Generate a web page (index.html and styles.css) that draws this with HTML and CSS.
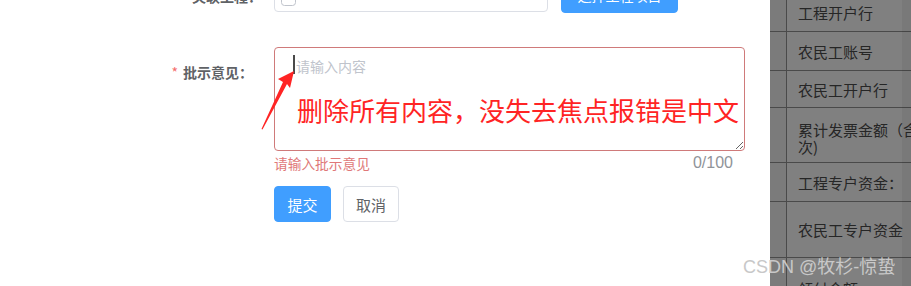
FILE: index.html
```html
<!DOCTYPE html>
<html lang="zh-CN">
<head>
<meta charset="utf-8">
<title>批示意见</title>
<link rel="stylesheet" href="styles.css">
</head>
<body>
<div class="page">
  <main class="form">
    <div class="row row-top">
      <label class="label label-top">关联工程：</label>
      <div class="input">
        <svg class="input-icon" viewBox="0 0 17 16" aria-hidden="true">
          <path d="M1.5 0 V11.5 a3 3 0 0 0 3 3 H12.5 a3 3 0 0 0 3 -3 V0" fill="none" stroke="#c0c4cc" stroke-width="1"/>
        </svg>
      </div>
      <button class="btn btn-primary btn-top">选择工程项目</button>
    </div>

    <div class="row row-opinion">
      <label class="label label-opinion"><span class="star">*</span>批示意见：</label>
      <div class="field">
        <textarea class="textarea" placeholder="请输入内容" readonly></textarea>
        <span class="caret"></span>
        <span class="annotation">删除所有内容，没失去焦点报错是中文</span>
        <svg class="arrow" viewBox="0 0 40 65" aria-hidden="true">
          <polygon points="36,4 20,12 25,15 3.5,62 4.5,62.5 29,17 32,21" fill="#ff2424"/>
        </svg>
      </div>
    </div>

    <div class="row row-meta">
      <div class="meta">
        <span class="error">请输入批示意见</span>
        <span class="counter">0/100</span>
      </div>
    </div>

    <div class="row row-actions">
      <button class="btn btn-primary btn-submit">提交</button>
      <button class="btn btn-default">取消</button>
    </div>
  </main>

  <aside class="panel">
    <div class="prow prow-a"><div class="pcol"></div><div class="pcell">工程开户行</div></div>
    <div class="prow prow-b"><div class="pcol"></div><div class="pcell">农民工账号</div></div>
    <div class="prow prow-c"><div class="pcol"></div><div class="pcell">农民工开户行</div></div>
    <div class="prow prow-d"><div class="pcol"></div><div class="pcell pcell-multi">累计发票金额（含本<br>次)</div></div>
    <div class="prow prow-e"><div class="pcol"></div><div class="pcell">工程专户资金：</div></div>
    <div class="prow prow-f"><div class="pcol"></div><div class="pcell">农民工专户资金</div></div>
    <div class="prow prow-g"><div class="pcol"></div><div class="pcell pcell-top">领付金额</div></div>
    <div class="panel-edge"></div>
  </aside>

  <div class="watermark">CSDN @牧杉-惊蛰</div>
</div>
</body>
</html>
```

FILE: styles.css
```css
* { box-sizing: border-box; }

html, body {
  margin: 0;
  padding: 0;
  background: #fff;
}

body {
  font-family: "Noto Sans CJK SC", "Noto Sans", sans-serif;
}

.page {
  position: relative;
  display: flex;
  width: 911px;
  height: 286px;
  overflow: hidden;
}

.form {
  width: 770px;
  flex: none;
}

.row { display: flex; }

.label {
  width: 274px;
  flex: none;
  text-align: right;
  font-size: 14px;
  font-weight: 700;
  color: #606266;
}

/* top (cut-off) row */
.row-top {
  margin-top: -24px;
  height: 36px;
}

.label-top {
  line-height: 36px;
  padding-right: 12px;
  padding-top: 2px;
}

.input {
  width: 274px;
  height: 36px;
  border: 1px solid #dcdfe6;
  border-radius: 4px;
  padding-left: 5px;
  display: flex;
  align-items: flex-start;
}

.input-icon {
  margin-top: 14px;
  width: 17px;
  height: 16px;
}

.btn {
  font-family: "Noto Sans CJK SC", sans-serif;
  border-radius: 4px;
  border: 1px solid transparent;
  padding: 0;
  font-size: 15px;
  line-height: 1;
}

.btn-primary {
  background: #409eff;
  border-color: #409eff;
  color: #fff;
}

.btn-top {
  width: 117px;
  height: 36px;
  margin-left: 13px;
  margin-top: 1px;
  font-size: 14px;
}

/* opinion row */
.row-opinion { margin-top: 35px; }

.label-opinion {
  height: 40px;
  line-height: 40px;
  margin-top: 5px;
  padding-right: 21px;
}

.star {
  color: #f56c6c;
  font-weight: 400;
  margin-right: 5px;
}

.field {
  position: relative;
  width: 471px;
  height: 104px;
}

.textarea {
  display: block;
  width: 471px;
  height: 104px;
  margin: 0;
  border: 1px solid #cf7a7a;
  border-radius: 4px;
  padding: 8px 21px;
  font: 14px/21px "Noto Sans CJK SC", sans-serif;
  color: #606266;
  background: #fff;
  outline: none;
  resize: vertical;
}

.textarea::placeholder { color: #c0c4cc; }

.caret {
  position: absolute;
  left: 19px;
  top: 8px;
  width: 2px;
  height: 19px;
  background: #4a4a4a;
}

.annotation {
  position: absolute;
  left: 23px;
  top: 48px;
  font-size: 26px;
  line-height: 30px;
  color: #ff2424;
  white-space: nowrap;
}

.arrow {
  position: absolute;
  left: -16px;
  top: 20px;
  width: 40px;
  height: 65px;
  overflow: visible;
}

/* meta row */
.row-meta {
  padding-left: 274px;
  margin-top: 2px;
}

.meta {
  width: 471px;
  height: 20px;
  display: flex;
  justify-content: space-between;
  align-items: center;
  padding-right: 12px;
}

.error {
  font-size: 13.7px;
  line-height: 20px;
  color: #e07878;
}

.counter {
  font-family: "Liberation Sans", sans-serif;
  font-size: 16px;
  color: #909399;
}

/* actions */
.row-actions {
  padding-left: 274px;
  margin-top: 13px;
}

.btn-submit {
  width: 57px;
  height: 36px;
}

.btn-default {
  width: 56px;
  height: 36px;
  margin-left: 12px;
  background: #fff;
  border-color: #dcdfe6;
  color: #606266;
}

/* dimmed table on the right */
.panel {
  position: relative;
  width: 141px;
  flex: none;
  background: #808080;
  overflow: hidden;
}

.prow {
  display: flex;
  border-bottom: 1px solid #4a4a4a;
}

.pcol {
  width: 17px;
  flex: none;
  background: #7b7b7b;
  border-right: 1px solid #4a4a4a;
}

.pcell {
  flex: 1;
  min-width: 0;
  display: flex;
  align-items: center;
  padding-left: 11px;
  font-size: 15px;
  line-height: 17px;
  color: #262626;
  white-space: nowrap;
  overflow: hidden;
}

.pcell-multi { padding-top: 5px; }

.pcell-top {
  align-items: flex-start;
  padding-top: 22px;
}

.prow-a { height: 39px; margin-top: -7px; }
.prow-b { height: 39px; }
.prow-c { height: 37px; }
.prow-d { height: 55px; }
.prow-e { height: 39px; }
.prow-f { height: 56px; }
.prow-g { height: 60px; }

.panel-edge {
  position: absolute;
  top: 0;
  right: 0;
  width: 9px;
  height: 100%;
  background: rgba(0, 0, 0, 0.05);
}

.watermark {
  position: absolute;
  left: 743px;
  top: 255px;
  font: 18px/24px "Liberation Sans", "Noto Sans CJK SC", sans-serif;
  color: #c8c8c8;
  white-space: nowrap;
}
```
